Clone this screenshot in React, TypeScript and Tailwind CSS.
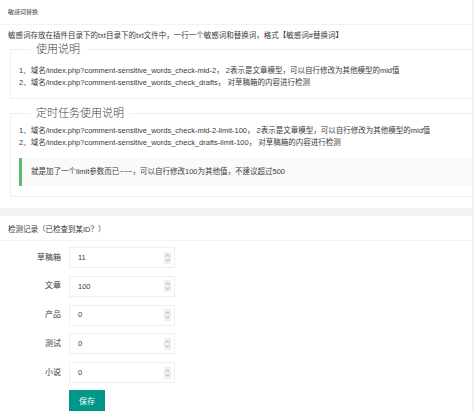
import React from "react";

const fields = [
    { label: "草稿箱", value: "11" },
    { label: "文章", value: "100" },
    { label: "产品", value: "0" },
    { label: "测试", value: "0" },
    { label: "小说", value: "0" },
];

function Spinner() {
    return (
        <svg width="7" height="12" viewBox="0 0 7 12" className="shrink-0">
            <rect x="0" y="0" width="7" height="12" rx="1" fill="#efefef" />
            <path d="M1.8 4.6 L3.5 2.8 L5.2 4.6" fill="none" stroke="#9a9a9a" strokeWidth="0.8" />
            <path d="M1.8 7.4 L3.5 9.2 L5.2 7.4" fill="none" stroke="#9a9a9a" strokeWidth="0.8" />
        </svg>
    );
}

export default function App() {
    return (
        <div className="min-h-screen overflow-hidden bg-[#f2f2f2] text-[#3a3a3a] font-['Liberation_Sans','Noto_Sans_CJK_SC',sans-serif]">
            {/* 敏感词替换 */}
            <div className="mr-[2px] bg-white">
                <div className="h-[25px] flex items-center px-[8px] border-b border-[#f3f3f3] text-[6px]">
                    敏感词替换
                </div>
                <div className="pl-[8px] pt-[5px] pb-[11px] text-[7.5px] leading-[12px]">
                    <p>敏感词存放在插件目录下的txt目录下的txt文件中，一行一个敏感词和替换词，格式【敏感词#替换词】</p>

                    <fieldset className="mt-px ml-[2px] border border-r-0 border-[#eeeeee] px-[8px] pb-[9px]">
                        <legend className="ml-[11px] px-[6px] text-[11px] leading-[13px] font-light text-[#444]">使用说明</legend>
                        <div className="pt-[9px]">
                            <p>1、域名/index.php?comment-sensitive_words_check-mid-2， 2表示是文章模型，可以自行修改为其他模型的mid值</p>
                            <p>2、域名/index.php?comment-sensitive_words_check_drafts， 对草稿箱的内容进行检测</p>
                        </div>
                    </fieldset>

                    <fieldset className="mt-[8px] ml-[2px] border border-r-0 border-[#eeeeee] pl-[8px] pb-[10px]">
                        <legend className="ml-[11px] px-[6px] text-[11px] leading-[13px] font-light text-[#444]">定时任务使用说明</legend>
                        <div className="pt-[5px]">
                            <p>1、域名/index.php?comment-sensitive_words_check-mid-2-limit-100， 2表示是文章模型，可以自行修改为其他模型的mid值</p>
                            <p>2、域名/index.php?comment-sensitive_words_check_drafts-limit-100， 对草稿箱的内容进行检测</p>
                        </div>
                        <div className="mt-[9px] h-[28px] flex items-center pl-[9px] bg-[#fafafa] border-l-[3px] border-[#5fb878] rounded-r-[1px]">
                            就是加了一个limit参数而已~~~，可以自行修改100为其他值，不建议超过500
                        </div>
                    </fieldset>
                </div>
            </div>

            {/* 检测记录 */}
            <div className="mt-[8px] mr-[2px] bg-white">
                <div className="h-[25px] flex items-end pb-[5px] px-[8px] border-b border-[#f3f3f3] text-[7.5px]">
                    检测记录（已检查到某ID？）
                </div>
                <form className="pt-[6px] pb-[20px] flex flex-col gap-[7.75px]">
                    {fields.map((f) => (
                        <div key={f.label} className="flex items-center">
                            <label className="w-[61px] text-right text-[8px]">{f.label}</label>
                            <div className="ml-[8px] w-[106px] h-[21px] flex items-center justify-between pl-[8px] pr-[3px] border border-[#eeeeee] text-[7.5px]">
                                <span>{f.value}</span>
                                <Spinner />
                            </div>
                        </div>
                    ))}
                    <div className="pl-[69px] -mt-[4px]">
                        <button type="button" className="w-[36px] h-[23px] bg-[#009688] text-white text-[8px]">
                            保存
                        </button>
                    </div>
                </form>
            </div>
        </div>
    );
}
